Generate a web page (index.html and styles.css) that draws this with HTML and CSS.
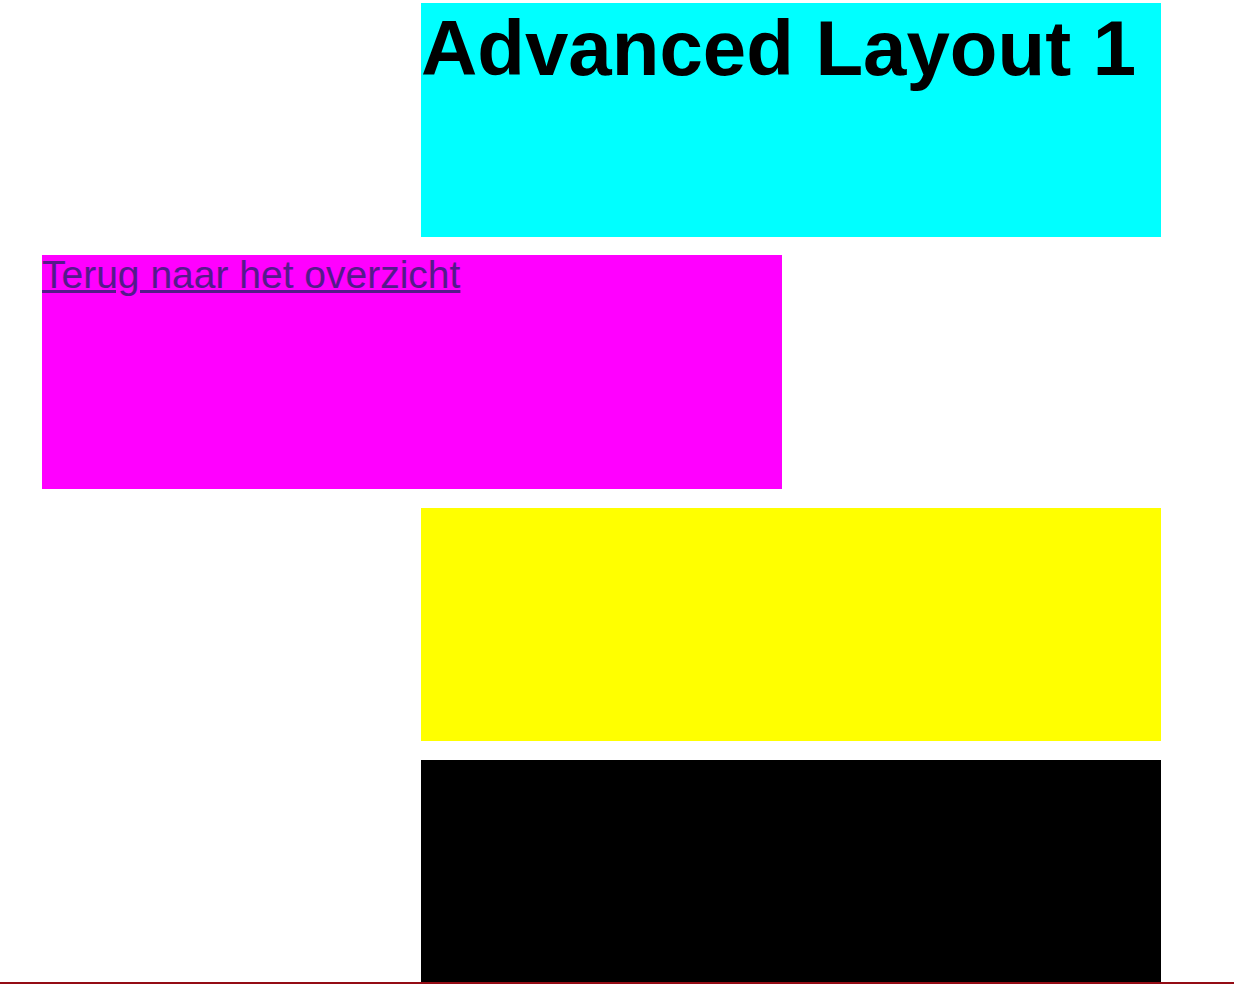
FILE: index.html
```html
<!DOCTYPE html>
<html lang="nl">
<head>
<meta charset="utf-8">
<title>Advanced Layout 1</title>
<link rel="stylesheet" href="styles.css">
</head>
<body>
<div class="page">
  <header class="block block-cyan">
    <h1 class="title">Advanced Layout 1</h1>
  </header>
  <nav class="block block-magenta">
    <a class="back" href="#">Terug naar het overzicht</a>
  </nav>
  <section class="block block-yellow"></section>
  <section class="block block-black"></section>
</div>
</body>
</html>
```
FILE: styles.css
```css
html, body {
  margin: 0;
  padding: 0;
  background: #ffffff;
}
body {
  font-family: "Liberation Sans", Arial, sans-serif;
}
.page {
  height: 984px;
  box-sizing: border-box;
  border-bottom: 2px solid #940c14;
  padding-top: 3px;
  display: flex;
  flex-direction: column;
  gap: 18.8px;
  overflow: hidden;
}
.block {
  width: 740px;
  height: 233.6px;
  flex: none;
  margin-left: 421px;
}
.block-cyan { background: #00ffff; }
.block-magenta { background: #ff00ff; margin-left: 42px; line-height: 1; }
.block-yellow { background: #ffff00; }
.block-black { background: #000000; }
.title {
  margin: 0;
  font-size: 78px;
  font-weight: bold;
  color: #000;
  line-height: normal;
}
.back {
  font-size: 39px;
  color: #551a8b;
  text-decoration: underline;
}
```
